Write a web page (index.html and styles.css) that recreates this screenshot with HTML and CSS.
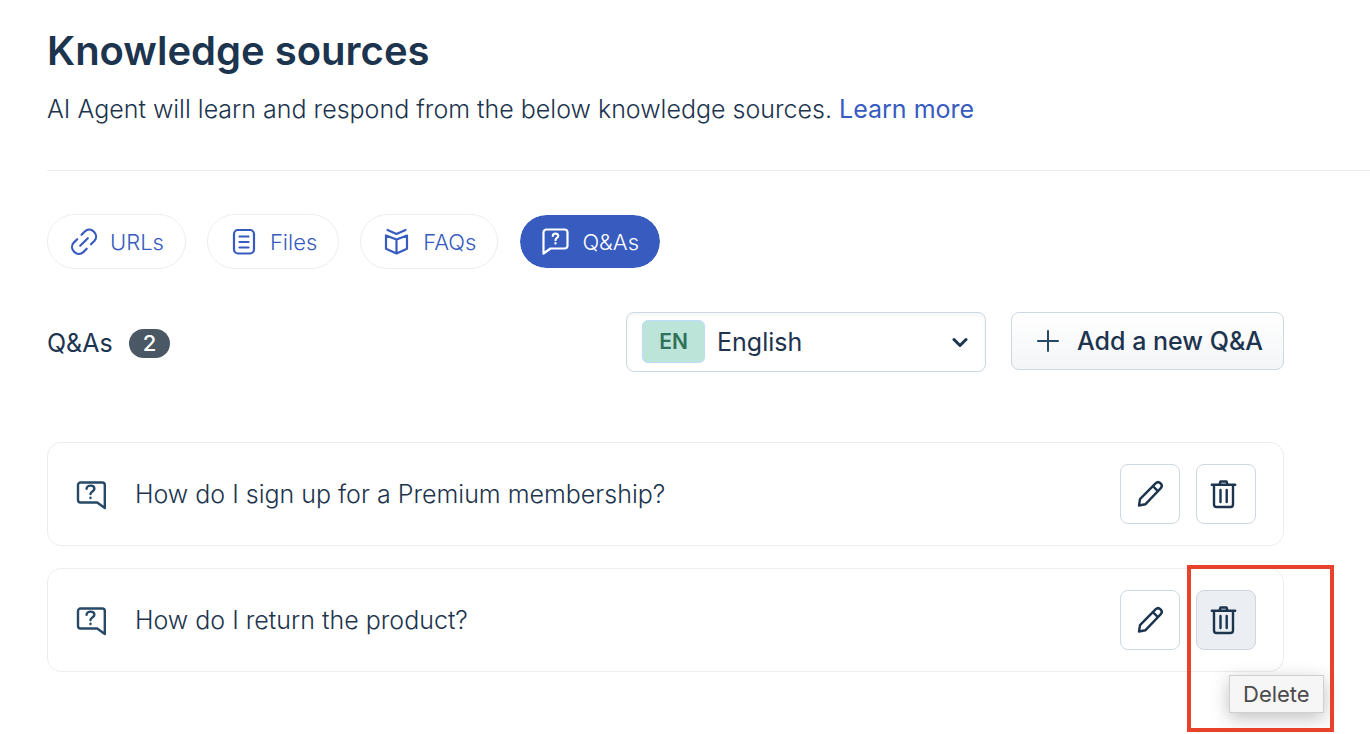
FILE: index.html
```html
<!DOCTYPE html>
<html lang="en">
<head>
<meta charset="utf-8">
<meta name="viewport" content="width=device-width, initial-scale=1">
<title>Knowledge sources</title>
<link rel="stylesheet" href="styles.css">
</head>
<body>
<svg class="sprite" aria-hidden="true">
  <symbol id="i-chat" viewBox="0 0 32 32">
    <path d="M28.800 30V7a2.500 2.500 0 0 0-2.500-2.500H4.500A2.500 2.500 0 0 0 2 7v15a2.500 2.500 0 0 0 2.500 2.500h16.700z"/>
    <path d="M10.600 10.800c0-4.300 7.800-4.200 7.800 0 0 2.700-3.900 2.800-3.900 5.200M14.500 19.600v.5"/>
  </symbol>
  <symbol id="i-pencil" viewBox="0 0 32 32">
    <path d="M5 27.500l1-6.300L21.800 5.200c3-3 8 1.800 5 4.900L11.300 26.300zM18.900 8.200l5 4.900"/>
  </symbol>
  <symbol id="i-trash" viewBox="0 0 32 32">
    <path d="M1.800 6.700h23.400M9.500 6.300l1-2.800h6l1 2.800M4 7v19.500a2.500 2.500 0 0 0 2.500 2.500h14a2.500 2.500 0 0 0 2.500-2.500V7M10.500 12v12M16.700 12v12"/>
  </symbol>
</svg>

<main class="page">
  <header class="intro">
    <h1 class="title">Knowledge sources</h1>
    <p class="lead">AI Agent will learn and respond from the below knowledge sources. <a class="link" href="#">Learn more</a></p>
  </header>

  <div class="content">
    <nav class="tabs" aria-label="Source types">
      <button class="tab" type="button">
        <svg class="tab-icon" viewBox="0 0 28 28" aria-hidden="true"><path d="M11.500 6.800l3.300-3.300c6-5.700 15.200 3.300 9.500 9.500l-3.300 3.300M7.200 11.200l-3.400 3.400c-5.700 6 3.300 15.200 9.500 9.500l3.400-3.400M10.200 17.800l7.600-7.600"/></svg>
        URLs
      </button>
      <button class="tab" type="button">
        <svg class="tab-icon" viewBox="0 0 28 28" aria-hidden="true"><rect x="4" y="2" width="20" height="23.500" rx="4"/><path d="M9.500 8.500h9M9.500 14h9M9.500 19.500h9"/></svg>
        Files
      </button>
      <button class="tab" type="button">
        <svg class="tab-icon" viewBox="0 0 28 28" aria-hidden="true"><path d="M4.500 2l9 4 9-4M13.500 11.500L3 7.500v13.300l10.500 4.700L24 20.800V7.500zM13.500 11.500v14"/></svg>
        FAQs
      </button>
      <button class="tab tab-active" type="button" aria-current="page">
        <svg class="tab-icon" viewBox="0 0 28 28" aria-hidden="true"><path d="M1.500 25.500V4.500a3 3 0 0 1 3-3h18a3 3 0 0 1 3 3v13a3 3 0 0 1-3 3H8.500z"/><path d="M10.800 8c0-3.200 5.400-3.200 5.400 0 0 2-2.700 2-2.700 4.200M13.500 15v.6"/></svg>
        Q&amp;As
      </button>
    </nav>

    <div class="toolbar">
      <h2 class="subtitle">Q&amp;As <span class="count">2</span></h2>
      <div class="language">
        <span class="code" aria-hidden="true">EN</span>
        <select class="language-select" aria-label="Language">
          <option>English</option>
        </select>
        <svg class="chevron" viewBox="0 0 16 12" aria-hidden="true"><path d="M2 2.500l6 6 6-6"/></svg>
      </div>
      <button class="add" type="button">
        <svg class="plus" viewBox="0 0 22 22" aria-hidden="true"><path d="M11 1v20M1 11h20"/></svg>
        Add a new Q&amp;A
      </button>
    </div>

    <ul class="list">
      <li class="card">
        <svg class="icon icon-chat" aria-hidden="true"><use href="#i-chat"/></svg>
        <span class="question">How do I sign up for a Premium membership?</span>
        <button class="action" type="button" aria-label="Edit"><svg class="icon" aria-hidden="true"><use href="#i-pencil"/></svg></button>
        <button class="action" type="button" aria-label="Delete"><svg class="icon" aria-hidden="true"><use href="#i-trash"/></svg></button>
      </li>
      <li class="card">
        <svg class="icon icon-chat" aria-hidden="true"><use href="#i-chat"/></svg>
        <span class="question">How do I return the product?</span>
        <button class="action" type="button" aria-label="Edit"><svg class="icon" aria-hidden="true"><use href="#i-pencil"/></svg></button>
        <div class="spot">
          <button class="action action-hover" type="button" aria-label="Delete"><svg class="icon" aria-hidden="true"><use href="#i-trash"/></svg></button>
          <span class="tooltip" role="tooltip">Delete</span>
          <span class="marker"></span>
        </div>
      </li>
    </ul>
  </div>
</main>
</body>
</html>
```
FILE: styles.css
```css
* {
  box-sizing: border-box;
}

body {
  margin: 0;
  background: #fff;
  color: #1c344e;
  font-family: Inter, "Liberation Sans", sans-serif;
  font-size: 25px;
  font-weight: 300;
  line-height: 32px;
}

button,
select {
  margin: 0;
  color: inherit;
  font: inherit;
}

svg {
  flex: none;
  fill: none;
  stroke: currentColor;
  stroke-linecap: round;
  stroke-linejoin: round;
}

.sprite {
  position: absolute;
  width: 0;
  height: 0;
}

.page {
  min-height: 100vh;
  padding: 26px 0 0 47px;
}

.intro {
  padding-bottom: 45px;
  border-bottom: 1px solid #ebeced;
}

.title {
  margin: 0 0 17px;
  font-size: 40px;
  font-weight: 600;
  line-height: 50px;
}

.lead {
  margin: 0;
}

.link {
  color: #375bbe;
  font-weight: 400;
  text-decoration: none;
}

.content {
  padding: 43px 86px 0 0;
}

.tabs {
  display: flex;
  gap: 21px;
}

.tab {
  display: flex;
  align-items: center;
  gap: 12px;
  height: 55px;
  padding: 0 21px 0 22px;
  border: 1px solid #ecedf3;
  border-radius: 28px;
  background: #fff;
  color: #375bbe;
  font-size: 22px;
}

.tab-active {
  border-color: #fff;
  background: #375bbe;
  background-clip: padding-box;
  color: #fff;
}

.tab-icon {
  width: 28px;
  height: 28px;
  stroke-width: 2.2;
}

.toolbar {
  display: flex;
  align-items: flex-start;
  gap: 25px;
  margin-top: 43px;
}

.subtitle {
  display: flex;
  flex: 1;
  align-items: center;
  gap: 16px;
  height: 62px;
  margin: 0;
  font-size: 25px;
  font-weight: 400;
}

.count {
  padding: 0 14px;
  border-radius: 15px;
  background: #4a5866;
  color: #fff;
  font-size: 22px;
  font-weight: 500;
  line-height: 29px;
}

.language {
  position: relative;
  width: 360px;
}

.language-select {
  width: 100%;
  height: 60px;
  padding: 0 44px 0 90px;
  border: 1px solid #cfd7df;
  border-radius: 8px;
  background: #fff;
  box-shadow: inset 0 2px 4px #f3f4f6;
  font-weight: 400;
  appearance: none;
}

.code {
  position: absolute;
  top: 8px;
  left: 16px;
  width: 63px;
  border: 1px solid #bbdcfe;
  border-radius: 6px;
  background: #bde4d8;
  color: #317159;
  font-size: 21px;
  font-weight: 600;
  line-height: 41px;
  text-align: center;
}

.chevron {
  position: absolute;
  top: 25px;
  right: 18px;
  width: 16px;
  height: 12px;
  pointer-events: none;
  stroke-width: 3;
}

.add {
  display: flex;
  align-items: center;
  gap: 18px;
  height: 58px;
  padding: 0 20px 0 25px;
  border: 1px solid #cfd7df;
  border-radius: 8px;
  background: linear-gradient(#fff, #f3f5f7);
  font-weight: 500;
}

.plus {
  width: 22px;
  height: 22px;
  stroke: #264966;
  stroke-width: 2;
}

.list {
  display: grid;
  gap: 22px;
  margin: 68px 0 0;
  padding: 0 0 62px;
  list-style: none;
}

.card {
  display: flex;
  align-items: center;
  gap: 16px;
  padding: 21px 27px 21px 28px;
  border: 1px solid #ebeef0;
  border-radius: 14px;
}

.icon {
  width: 32px;
  height: 32px;
  stroke-width: 2.4;
}

.icon-chat {
  color: #264966;
}

.question {
  flex: 1;
  padding-left: 11px;
}

.action {
  display: grid;
  place-items: center;
  width: 60px;
  height: 60px;
  padding: 0;
  border: 1px solid #cfd7df;
  border-radius: 8px;
  background: #fff;
}

.action-hover {
  background: #ebeff3;
}

.spot {
  position: relative;
}

.marker {
  position: absolute;
  top: -25px;
  left: -9px;
  width: 147px;
  height: 167px;
  border: 4px solid #e9422a;
  pointer-events: none;
}

.tooltip {
  position: absolute;
  top: 85px;
  left: 33px;
  padding: 0 13px;
  border: 1px solid #d0d0d0;
  background: #f6f6f6;
  box-shadow: 0 5px 18px rgba(0, 0, 0, 0.25);
  color: #4b4b4b;
  font-size: 22px;
  font-weight: 400;
  line-height: 36px;
}
```
